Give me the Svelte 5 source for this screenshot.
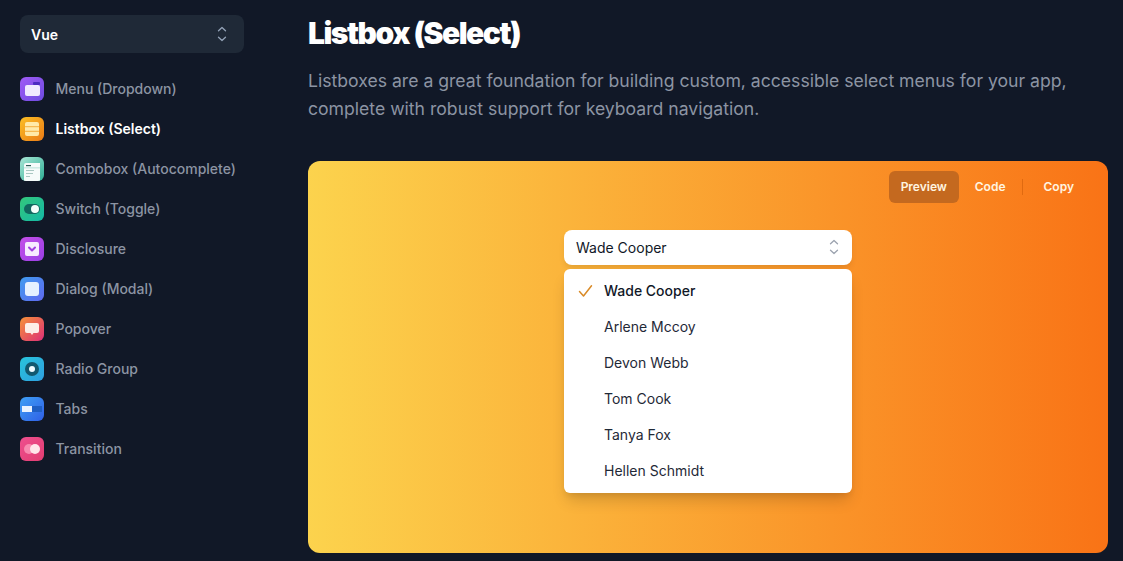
<script>
  const people = ['Wade Cooper', 'Arlene Mccoy', 'Devon Webb', 'Tom Cook', 'Tanya Fox', 'Hellen Schmidt'];

  const components = [
    { name: 'Menu (Dropdown)', icon: 'menu' },
    { name: 'Listbox (Select)', icon: 'listbox', active: true },
    { name: 'Combobox (Autocomplete)', icon: 'combobox' },
    { name: 'Switch (Toggle)', icon: 'switch' },
    { name: 'Disclosure', icon: 'disclosure' },
    { name: 'Dialog (Modal)', icon: 'dialog' },
    { name: 'Popover', icon: 'popover' },
    { name: 'Radio Group', icon: 'radio' },
    { name: 'Tabs', icon: 'tabs' },
    { name: 'Transition', icon: 'transition' }
  ];
</script>

<div class="page">
  <aside class="sidebar">
    <button class="framework">
      <span>Vue</span>
      <svg width="20" height="20" viewBox="0 0 20 20" fill="none" stroke="#94a3b8" stroke-width="1.3" stroke-linecap="round" stroke-linejoin="round">
        <path d="M6.500 6.800 10 3.500l3.500 3.300" />
        <path d="M6.500 13.200 10 16.500l3.500-3.300" />
      </svg>
    </button>

    <nav class="nav">
      {#each components as item}
        <a class="nav-item" class:active={item.active} href="#{item.icon}">
          <span class="icon {item.icon}">
            <svg width="24" height="24" viewBox="0 0 24 24">
              {#if item.icon === 'menu'}
                <rect x="5" y="8" width="15" height="11" rx="2" fill="#f0e9ff" />
                <rect x="13" y="5" width="7" height="3" rx="1" fill="#4c2bc0" />
              {:else if item.icon === 'listbox'}
                <rect x="5" y="5" width="14" height="14" rx="2" fill="#ffe9a8" />
                <rect x="5" y="9.200" width="14" height="1" fill="#f4ad3c" />
                <rect x="5" y="13.800" width="14" height="1" fill="#f4ad3c" />
              {:else if item.icon === 'combobox'}
                <path d="M4 8a2 2 0 0 1 2-2h14v18H4z" fill="#f6fbfa" />
                <rect x="6" y="8" width="5" height="1.200" fill="#33605a" />
                <rect x="6" y="13" width="8" height="1" fill="#a9c7c2" />
                <rect x="6" y="16" width="7" height="1" fill="#a9c7c2" />
                <rect x="6" y="19" width="4" height="1" fill="#a9c7c2" />
                <rect x="4" y="10.500" width="16" height="0.800" fill="#a8dcd0" />
              {:else if item.icon === 'switch'}
                <rect x="4" y="7" width="16" height="10" rx="5" fill="#11675f" />
                <circle cx="15" cy="12" r="4" fill="#f2fffb" />
              {:else if item.icon === 'disclosure'}
                <rect x="5" y="5" width="14" height="14" rx="2" fill="#f7eaff" />
                <path d="M9 10.500l3 3 3-3" fill="none" stroke="#a13fe0" stroke-width="2" stroke-linecap="round" stroke-linejoin="round" />
              {:else if item.icon === 'dialog'}
                <rect x="5" y="5" width="14" height="14" rx="3" fill="#e6f1ff" />
              {:else if item.icon === 'popover'}
                <path d="M7 6h10a2 2 0 0 1 2 2v6a2 2 0 0 1-2 2h-3.500L12 18l-1.500-2H7a2 2 0 0 1-2-2V8a2 2 0 0 1 2-2z" fill="#fdeee8" />
              {:else if item.icon === 'radio'}
                <circle cx="12" cy="12" r="7" fill="#12586f" />
                <circle cx="12" cy="12" r="3" fill="#f0fbff" />
              {:else if item.icon === 'tabs'}
                <rect x="2" y="9" width="10" height="6" fill="#e9f3ff" />
                <rect x="12" y="9" width="10" height="6" fill="#1f5fc4" />
              {:else if item.icon === 'transition'}
                <circle cx="9" cy="12" r="5" fill="#f88ab0" />
                <circle cx="15" cy="12" r="5" fill="#ffe6ea" />
              {/if}
            </svg>
          </span>
          <span class="nav-label">{item.name}</span>
        </a>
      {/each}
    </nav>
  </aside>

  <main class="content">
    <h1>Listbox (Select)</h1>
    <p class="lead">
      Listboxes are a great foundation for building custom, accessible select menus for your app,
      complete with robust support for keyboard navigation.
    </p>

    <section class="preview">
      <div class="toolbar">
        <button class="tab selected">Preview</button>
        <button class="tab">Code</button>
        <span class="divider"></span>
        <button class="tab">Copy</button>
      </div>

      <div class="select">
        <button class="select-button">
          Wade Cooper
          <svg width="20" height="20" viewBox="0 0 20 20" fill="none" stroke="#9ca3af" stroke-width="1.3" stroke-linecap="round" stroke-linejoin="round">
            <path d="M6.500 6.800 10 3.500l3.500 3.300" />
            <path d="M6.500 13.200 10 16.500l3.500-3.300" />
          </svg>
        </button>

        <ul class="options">
          {#each people as person, i}
            <li class="option" class:picked={i === 0}>
              {#if i === 0}
                <svg class="check" width="20" height="20" viewBox="0 0 20 20" fill="none" stroke="#d98a26" stroke-width="1.5" stroke-linecap="round" stroke-linejoin="round">
                  <path d="M3.500 10.500 7.500 15 15.500 4.800" />
                </svg>
              {/if}
              {person}
            </li>
          {/each}
        </ul>
      </div>
    </section>
  </main>
</div>

<style>
  :global(body) {
    margin: 0;
    background: #111827;
  }

  .page {
    display: flex;
    height: 561px;
    overflow: hidden;
    background: #111827;
    font-family: Inter, 'Liberation Sans', sans-serif;
  }

  button {
    font: inherit;
    border: 0;
    cursor: pointer;
  }

  .sidebar {
    flex: none;
    width: 224px;
    padding: 15px 0 0 20px;
  }

  .framework {
    display: flex;
    align-items: center;
    justify-content: space-between;
    box-sizing: border-box;
    width: 224px;
    height: 38px;
    padding: 0 12px 0 11px;
    border-radius: 8px;
    background: #1f2937;
    color: #fff;
    font-size: 14px;
    font-weight: 600;
  }

  .nav {
    display: flex;
    flex-direction: column;
    margin-top: 16px;
  }

  .nav-item {
    display: flex;
    align-items: center;
    gap: 11.5px;
    height: 40px;
    color: #8c94a3;
    font-size: 14px;
    font-weight: 500;
    text-decoration: none;
  }

  .nav-item.active {
    color: #fff;
    font-weight: 600;
  }

  .nav-label {
    margin-bottom: 2px;
    white-space: nowrap;
  }

  .icon {
    display: block;
    flex: none;
    width: 24px;
    height: 24px;
    overflow: hidden;
    border-radius: 6px;
  }

  .icon svg {
    display: block;
  }

  .menu { background: linear-gradient(135deg, #a05bf6, #6d4be0); }
  .listbox { background: linear-gradient(135deg, #fbbf24, #ea7a16); }
  .combobox { background: linear-gradient(135deg, #a9e6d6, #2fae95); }
  .switch { background: linear-gradient(135deg, #34c77b, #14b8a6); }
  .disclosure { background: linear-gradient(135deg, #c44fe8, #9a3fe6); }
  .dialog { background: linear-gradient(135deg, #3f9cf0, #6068ee); }
  .popover { background: linear-gradient(135deg, #f59238, #dd2f78); }
  .radio { background: linear-gradient(135deg, #28c4dc, #2f9fe0); }
  .tabs { background: linear-gradient(135deg, #3ea0f5, #2f5fe6); }
  .transition { background: linear-gradient(135deg, #ee4f8e, #e23d72); }

  .content {
    flex: none;
    width: 800px;
    margin-left: 64px;
  }

  h1 {
    margin: 15px 0 0;
    color: #fff;
    font-size: 30px;
    line-height: 36px;
    font-weight: 900;
    letter-spacing: -1.5px;
  }

  .lead {
    margin: 16px 0 0;
    color: #8c94a3;
    font-size: 17.62px;
    line-height: 28px;
  }

  .preview {
    position: relative;
    display: flex;
    justify-content: center;
    box-sizing: border-box;
    height: 392px;
    margin-top: 38px;
    padding-top: 69px;
    border-radius: 12px;
    background: linear-gradient(90deg, #fcd34d, #f97316);
  }

  .toolbar {
    position: absolute;
    top: 10px;
    right: 22px;
    display: flex;
    align-items: center;
  }

  .tab {
    height: 32px;
    padding: 0 12px 1px;
    margin-left: 4px;
    border-radius: 6px;
    background: transparent;
    color: #fff5e0;
    font-size: 12px;
    font-weight: 600;
  }

  .tab.selected {
    width: 70px;
    margin-left: 0;
    padding: 0 0 1px;
    background: #c4691f;
  }

  .divider {
    width: 1px;
    height: 16px;
    margin: 0 5px 0 4px;
    background: #e06a10;
  }

  .select {
    width: 288px;
  }

  .select-button {
    display: flex;
    align-items: center;
    justify-content: space-between;
    box-sizing: border-box;
    width: 100%;
    height: 35px;
    padding: 0 8px 1px 12px;
    border-radius: 8px;
    background: #fff;
    color: #111827;
    font-size: 14px;
    box-shadow: 0 4px 6px -1px rgba(0, 0, 0, 0.1);
  }

  .options {
    margin: 4px 0 0;
    padding: 4px 0;
    list-style: none;
    border-radius: 6px;
    background: #fff;
    box-shadow: 0 10px 15px -3px rgba(0, 0, 0, 0.16), 0 4px 6px -2px rgba(0, 0, 0, 0.08);
  }

  .option {
    position: relative;
    height: 36px;
    padding-left: 40px;
    color: #1f2937;
    font-size: 14px;
    line-height: 36px;
  }

  .option.picked {
    color: #111827;
    font-weight: 500;
  }

  .check {
    position: absolute;
    left: 12px;
    top: 8px;
  }
</style>
